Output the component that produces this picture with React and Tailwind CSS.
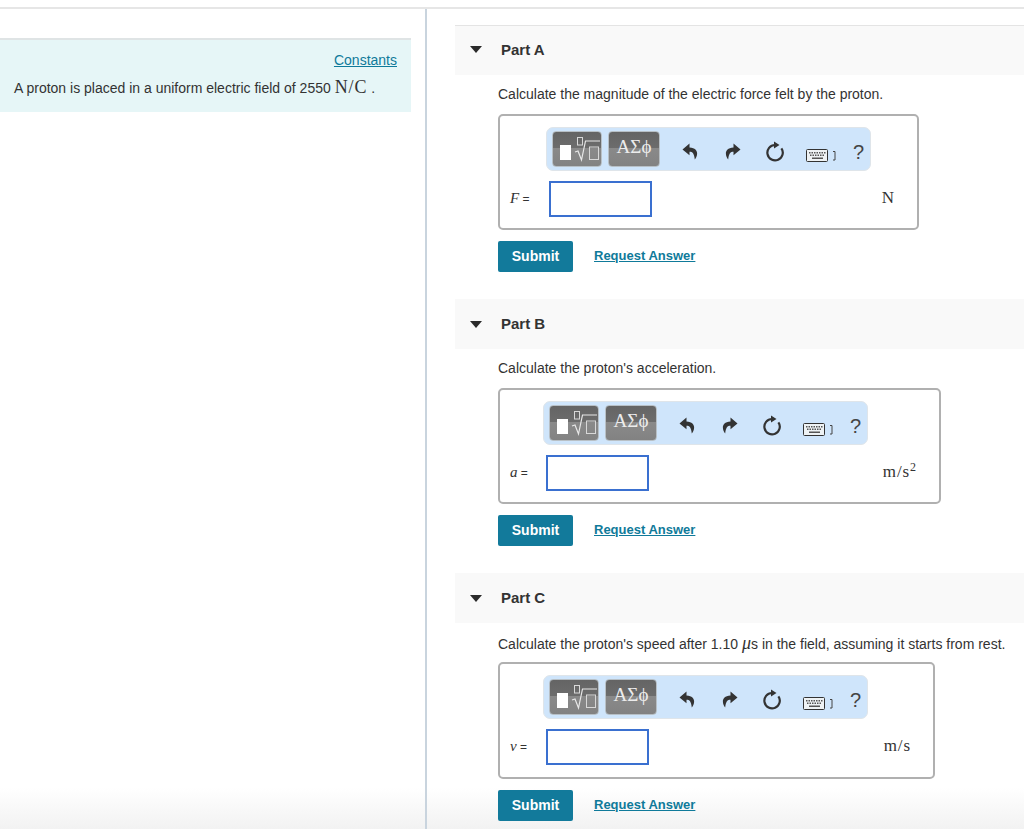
const sans = "font-['Liberation_Sans',Arial,sans-serif]";

function TemplateIcon() {
  return (
    <svg width="48" height="34" viewBox="0 0 48 34" className="block">
      <rect x="7" y="13" width="11" height="15" fill="#fff" />
      <rect x="24.5" y="5.5" width="5" height="7.5" fill="none" stroke="#d8d8d8" strokeWidth="1" />
      <path d="M22 20 L25 19 L28.5 28 L32.5 9 H47" fill="none" stroke="#e8e8e8" strokeWidth="1.2" />
      <rect x="36.5" y="15" width="9" height="12.5" fill="none" stroke="#d8d8d8" strokeWidth="1" />
    </svg>
  );
}

function Undo({ flip }) {
  return (
    <svg width="17" height="17" viewBox="0 0 17 17" className={flip ? "block -scale-x-100" : "block"}>
      <path d="M7.5 0.5 L0.5 6.5 L7.5 12.2 V8.8 C10.5 8.8 12.2 10.5 12.8 16.5 C16 13 17.2 4.8 7.5 4.4 Z" fill="#333" />
    </svg>
  );
}

function Reset() {
  return (
    <svg width="20" height="21" viewBox="0 0 20 21" className="block">
      <path d="M10 4 A7.7 7.7 0 1 0 16.4 7.3" fill="none" stroke="#333" strokeWidth="2.2" />
      <path d="M9 0.5 L14.5 4 L9 7.5 Z" fill="#333" />
    </svg>
  );
}

function Keyboard() {
  return (
    <svg width="30" height="13" viewBox="0 0 30 13" className="block">
      <rect x="0.5" y="0.5" width="21" height="12" rx="1" fill="#eef2f4" stroke="#333" />
      {[3, 5.5, 8, 10.5, 13, 15.5, 18].map((x) => (
        <rect key={x} x={x} y="3" width="1.5" height="1.5" fill="#555" />
      ))}
      {[4, 6.5, 9, 11.5, 14, 16.5].map((x) => (
        <rect key={x} x={x} y="5.5" width="1.5" height="1.5" fill="#555" />
      ))}
      <rect x="6" y="8.5" width="11" height="1.5" fill="#555" />
      <path d="M27 2.5 H29 V11 H27" fill="none" stroke="#444" strokeWidth="1" />
    </svg>
  );
}

function GrayButton({ className, children }) {
  return (
    <div className={`h-[36px] rounded-[4px] border border-[#b8c0c6] bg-[linear-gradient(#646464_0,#6c6c6c_46%,#8a8a8a_46%,#828282_100%)] flex items-center justify-center ${className}`}>
      {children}
    </div>
  );
}

function Part({ letter, question, questionTop, symbol, unit, boxW, toolbarLeft, labelW, tall, topLine }) {
  return (
    <section>
      <header className={`h-[50px] bg-[#f9f9f9] flex items-center pl-[15px] gap-[19px] ${topLine ? "border-t border-[#e4e4e4] pb-[2px]" : ""}`}>
        <svg width="12" height="7" viewBox="0 0 12 7" className="block"><path d="M0 0 H12 L6 7 Z" fill="#2b2b2b" /></svg>
        <span className="text-[15px] leading-[18px] font-bold text-[#333]">Part {letter}</span>
      </header>
      <div className="pl-[43px]">
        <p className={`h-[39px] text-[14px] leading-[18px] text-[#333] whitespace-nowrap ${questionTop}`}>{question}</p>
        <div className={`rounded-[5px] border-2 border-[#b0b0b0] ${tall ? "h-[117px]" : "h-[116px]"}`} style={{ width: boxW }}>
          <div className="flex" style={{ paddingLeft: toolbarLeft }}>
            <div className="mt-[11px] w-[325px] h-[44px] rounded-[7px] bg-[#cfe5fb] border border-[#dfe5ea] flex items-center pl-[5px]">
              <GrayButton className="w-[50px]"><TemplateIcon /></GrayButton>
              <GrayButton className="w-[52px] ml-[6px] pb-[3px] text-[#ececec] text-[19px] font-['Liberation_Serif',serif]">ΑΣϕ</GrayButton>
              <div className="ml-[22px] mt-[4px]"><Undo /></div>
              <div className="ml-[25px] mt-[4px]"><Undo flip /></div>
              <div className="ml-[24px] mt-[5px]"><Reset /></div>
              <div className="ml-[21px] mt-[12px]"><Keyboard /></div>
              <span className="ml-[17px] mt-[6px] text-[20px] leading-none text-[#444]">?</span>
            </div>
          </div>
          <div className="flex items-center mt-[10px] pr-[22px]">
            <span className="text-[12px] text-[#333] pl-[10px] pb-[2px] whitespace-nowrap" style={{ width: labelW }}>{symbol}</span>
            <div className="w-[103px] h-[36px] border-2 border-[#3a70d0] bg-white" />
            <span className="ml-auto pb-[2px] text-[17px] tracking-[0.9px] text-[#333] font-['Liberation_Serif',serif]">{unit}</span>
          </div>
        </div>
        <div className="flex items-center mt-[11px] gap-[21px]">
          <button className="w-[75px] h-[31px] rounded-[2px] bg-[#127a9b] text-white text-[14px] font-bold">Submit</button>
          <a className="-mt-[1px] text-[#0f7a9a] text-[13px] font-bold underline">Request Answer</a>
        </div>
      </div>
    </section>
  );
}

const Mv = ({ c }) => <i className="font-['Liberation_Serif',serif] text-[15px]">{c}</i>;

export default function App() {
  return (
    <div className={`relative h-[829px] w-[1024px] overflow-hidden bg-[linear-gradient(#fff_0,#fff_95%,#f2f2f2_100%)] ${sans}`}>
      <div className="mt-[7px] h-[2px] bg-[#e6e6e6]" />
      <div className="flex h-[820px]">
        <aside className="w-[427px] shrink-0 border-r-2 border-[#c9d4de] pt-[29px]">
          <div className="w-[411px] h-[74px] bg-[#e6f6f7] border-t-2 border-[#dfe4e5] pl-[14px] pr-[14px]">
            <div className="text-right pt-[11px] text-[14px] leading-[18px]">
              <a className="text-[#0f7a9a] underline">Constants</a>
            </div>
            <p className="mt-[9px] text-[14px] leading-[18px] text-[#333] whitespace-nowrap">
              A proton is placed in a uniform electric field of 2550{" "}
              <span className="font-['Liberation_Serif',serif] text-[18px] tracking-[0.9px]">N/C</span> .
            </p>
          </div>
        </aside>
        <main className="flex-1 pl-[28px] pt-[16px] flex flex-col gap-[27px]">
          <Part topLine letter="A" questionTop="pt-[10px]" question="Calculate the magnitude of the electric force felt by the proton." symbol={<><Mv c="F" /> =</>} unit="N" boxW={421} toolbarLeft={46} labelW={49} />
          <Part letter="B" questionTop="pt-[10px]" question="Calculate the proton's acceleration." symbol={<><Mv c="a" /> =</>} unit={<span>m/s<sup className="text-[12px]">2</sup></span>} boxW={443} toolbarLeft={43} labelW={46} />
          <Part tall letter="C" questionTop="pt-[11px]" question={<>Calculate the proton's speed after 1.10 <i className="font-['Liberation_Serif',serif] text-[18px] leading-none">μ</i>s in the field, assuming it starts from rest.</>} symbol={<><Mv c="v" /> =</>} unit="m/s" boxW={437} toolbarLeft={43} labelW={46} />
        </main>
      </div>
    </div>
  );
}
